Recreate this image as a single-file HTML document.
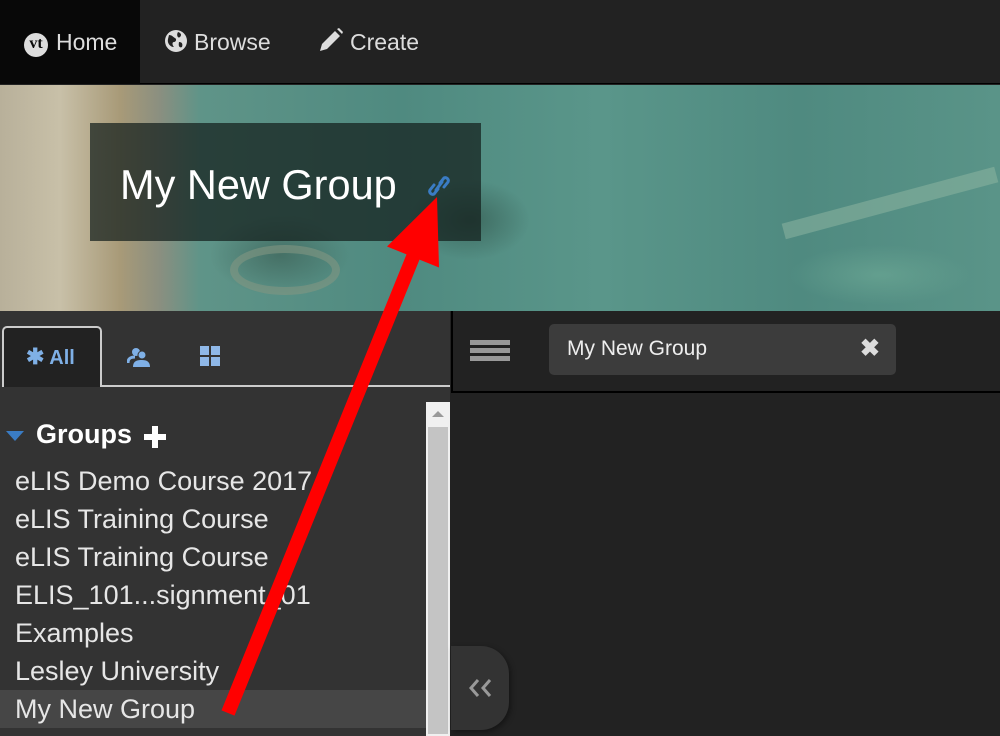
<!DOCTYPE html>
<html><head><meta charset="utf-8"><style>
*{margin:0;padding:0;box-sizing:border-box}
body{width:1000px;height:736px;overflow:hidden;background:#222;font-family:"Liberation Sans",Arial,sans-serif;position:relative}
.nav{position:absolute;left:0;top:0;width:1000px;height:84px;background:#222;border-bottom:1px solid #000}
.nav .it{position:absolute;top:0;height:84px;line-height:84px;color:#ddd;font-size:23px}
.banner{position:absolute;left:0;top:85px;width:1000px;height:226px;overflow:hidden;
background:
radial-gradient(ellipse 60px 40px at 470px 135px,rgba(40,70,60,.5),transparent),
radial-gradient(ellipse 90px 30px at 880px 190px,rgba(110,170,150,.6),transparent),
radial-gradient(ellipse 70px 40px at 280px 170px,rgba(50,80,70,.5),transparent),
linear-gradient(90deg,#b8b09a 0,#c8c0a8 60px,#a89a78 120px,#8a8f80 160px,#5f9488 200px,#4f8a80 400px,#5a968a 600px,#4f8a80 800px,#5a9488 1000px)}
.title{position:absolute;left:90px;top:38px;width:391px;height:118px;background:rgba(20,30,28,.72);color:#fff;font-size:41.5px;padding:38px 0 0 30px}
.left{position:absolute;left:0;top:311px;width:450px;height:425px;background:#333}
.tab{position:absolute;left:2px;top:15px;width:100px;height:61px;background:#222;border:2px solid #ccc;border-bottom:none;border-radius:5px 5px 0 0;color:#7fb0e6;font-weight:bold;font-size:20px;line-height:58px;padding-left:22px}
.tline{position:absolute;left:100px;top:74px;width:350px;height:2px;background:#ccc}
.items{position:absolute;left:0;top:151px;width:426px}
.items div{height:38px;line-height:38px;color:#e6e6e6;font-size:27px;padding-left:15px}
.right{position:absolute;left:451px;top:311px;width:549px;height:425px;background:#222}
.rh{position:absolute;left:0;top:0;width:549px;height:82px;border-bottom:2px solid #000;border-left:2px solid #000}
.pill{position:absolute;left:96px;top:13px;width:347px;height:51px;background:#3c3c3c;border-radius:5px;color:#eee;font-size:21px;line-height:49px;padding-left:18px}
</style></head><body>
<div class="nav">
 <div class="it" style="left:0;width:140px;background:#080808;padding-left:24px"><span style="display:inline-block;width:24px;height:24px;border-radius:50%;background:#ddd;color:#080808;font-family:'Liberation Serif',serif;font-size:16px;line-height:22px;text-align:center;vertical-align:2px;margin-right:8px;font-weight:bold">vt</span>Home</div>
 <div class="it" style="left:164px"><svg width="24" height="24" viewBox="0 0 24 24" style="vertical-align:-3px;margin-right:6px"><circle cx="12" cy="12" r="11" fill="#ddd"/><path d="M5 6c3 0 4 2 6 3s1 4-1 4-2 3 0 5c-4 0-7-4-6-8zM14 3c3 1 4 3 2 5s-4-2-2-5zM15 13c3 0 4 2 3 5-2 1-4 0-3-5z" fill="#222"/></svg>Browse</div>
 <div class="it" style="left:318px"><svg width="26" height="26" viewBox="0 0 26 26" style="vertical-align:-3px;margin-right:6px"><path d="M2 24l2-7L17 4l5 5L9 22z M19 2l2-1 4 4-1 2z" fill="#ddd"/></svg>Create</div>
</div>
<div class="banner">
 <div style="position:absolute;left:230px;top:160px;width:110px;height:50px;border:8px solid rgba(130,150,130,.6);border-radius:50%"></div>
 <div style="position:absolute;left:780px;top:110px;width:220px;height:16px;background:rgba(140,180,160,.55);transform:rotate(-15deg)"></div>
 <div class="title">My New Group<svg width="26" height="30" viewBox="0 0 26 30" style="position:absolute;left:336px;top:48px"><path d="M14 12l4-5a3 3 0 0 1 4 4l-4 5M12 18l-4 5a3 3 0 0 1-4-4l4-5M10 19l6-8" stroke="#3a7cc4" stroke-width="3" fill="none" stroke-linecap="round"/></svg></div>
</div>
<div class="left">
 <div class="tab"><span style="font-size:22px">✱</span> All</div>
 <svg style="position:absolute;left:127px;top:34px" width="24" height="24" viewBox="0 0 24 24"><circle cx="9" cy="7" r="4" fill="#7fb0e6"/><circle cx="15" cy="10" r="4" fill="#7fb0e6" stroke="#333" stroke-width="1"/><path d="M6 22c0-6 4-7 9-7s8 2 8 7z" fill="#7fb0e6"/><path d="M1 18c0-5 3-6 7-6" stroke="#7fb0e6" stroke-width="3" fill="none"/></svg>
 <svg style="position:absolute;left:200px;top:35px" width="21" height="20"><rect x="0" y="0" width="9" height="9" fill="#8fb8e8"/><rect x="11" y="0" width="9" height="9" fill="#8fb8e8"/><rect x="0" y="11" width="9" height="9" fill="#8fb8e8"/><rect x="11" y="11" width="9" height="9" fill="#8fb8e8"/></svg>
 <div class="tline"></div>
 <svg style="position:absolute;left:6px;top:120px" width="20" height="12"><path d="M0 0h18L9 10z" fill="#3a7cc4"/></svg>
 <div style="position:absolute;left:36px;top:108px;color:#fff;font-weight:bold;font-size:27px">Groups</div>
 <svg style="position:absolute;left:144px;top:115px" width="22" height="22"><path d="M8 0h6v8h8v6h-8v8H8v-8H0V8h8z" fill="#fff"/></svg>
 <div class="items">
  <div>eLIS Demo Course 2017</div><div>eLIS Training Course</div><div>eLIS Training Course</div><div>ELIS_101...signment_01</div><div>Examples</div><div>Lesley University</div><div style="background:#464646">My New Group</div>
 </div>
 <div style="position:absolute;left:426px;top:91px;width:24px;height:334px;background:#c4c4c4;border:2px solid #f0f0f0;border-top:none"></div>
 <div style="position:absolute;left:426px;top:91px;width:24px;height:25px;background:#f0f0f0"></div>
 <svg style="position:absolute;left:432px;top:99px" width="12" height="8"><path d="M0 7L6 1l6 6z" fill="#999"/></svg>
</div>
<div class="right">
 <div class="rh">
  <svg style="position:absolute;left:17px;top:29px" width="42" height="22"><rect y="0" width="40" height="5" fill="#999"/><rect y="8" width="40" height="5" fill="#999"/><rect y="16" width="40" height="5" fill="#999"/></svg>
  <div class="pill">My New Group<span style="position:absolute;right:16px;top:0;font-size:24px;font-weight:bold;color:#ddd">✖</span></div>
 </div>
 <div style="position:absolute;left:0;top:335px;width:58px;height:84px;background:#333;border-radius:0 28px 28px 0;box-shadow:2px 2px 6px rgba(0,0,0,.4)"></div>
 <svg style="position:absolute;left:18px;top:367px" width="24" height="20"><path d="M9 2L2 10l7 8M21 2l-7 8 7 8" stroke="#999" stroke-width="3" fill="none"/></svg>
</div>
<svg style="position:absolute;left:0;top:0" width="1000" height="736"><path d="M221.5 710.4L234.5 715.6L419.5 259.6L439 267.5L437 197L387 246.5L406.5 254.4Z" fill="#f00"/></svg>
</body></html>
